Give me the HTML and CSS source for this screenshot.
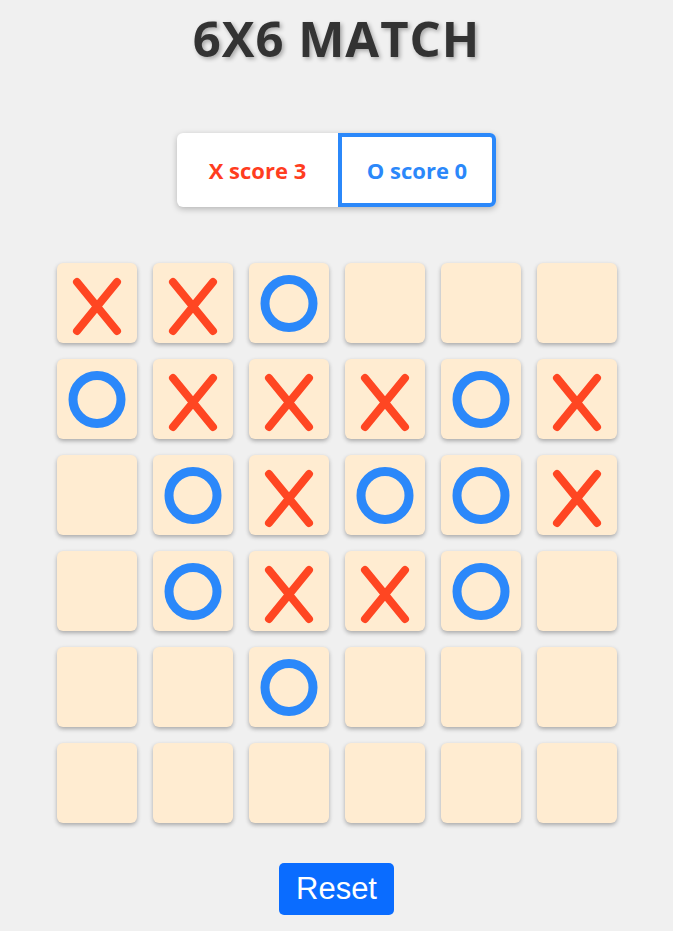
FILE: index.html
```html
<!DOCTYPE html>
<html lang="en">
<head>
    <meta charset="UTF-8">
    <meta name="viewport" content="width=device-width, initial-scale=1.0">
    <title>6X6 Match</title>
    <link rel="stylesheet" href="styles.css">
</head>
<body>
    <div class="game">
        <h1 class="title">6X6 MATCH</h1>

        <div class="scores">
            <div class="score score-x">X score 3</div>
            <div class="score score-o active">O score 0</div>
        </div>

        <div class="board" id="board"></div>

        <button class="reset" type="button">Reset</button>
    </div>

    <script>
        const layout = [
            "XXO...",
            "OXXXOX",
            ".OXOOX",
            ".OXXO.",
            "..O...",
            "......"
        ];

        const xMark = '<svg viewBox="0 0 80 80" width="80" height="80"><path d="M20 19 L60 68 M60 19 L20 68" stroke="#ff4622" stroke-width="8" stroke-linecap="round" fill="none"/></svg>';
        const oMark = '<svg viewBox="0 0 80 80" width="80" height="80"><circle cx="40" cy="40.5" r="24" stroke="#2b88fa" stroke-width="9" fill="none"/></svg>';

        const board = document.getElementById("board");
        layout.forEach(row => {
            for (const ch of row) {
                const cell = document.createElement("div");
                cell.classList.add("cell");
                if (ch === "X") cell.innerHTML = xMark;
                if (ch === "O") cell.innerHTML = oMark;
                board.appendChild(cell);
            }
        });
    </script>
</body>
</html>
```

FILE: styles.css
```css
body {
    margin: 0;
    padding: 0;
    background: #f0f0f0;
    font-family: 'Open Sans', 'Noto Sans', sans-serif;
}
.game {
    display: flex;
    flex-direction: column;
    align-items: center;
}
.title {
    margin: 8px 0 0;
    font-size: 49px;
    font-weight: 700;
    color: #333;
    letter-spacing: 1px;
    line-height: 60px;
    text-shadow: 2px 2px 4px rgba(0, 0, 0, 0.3);
}
.scores {
    display: flex;
    margin-top: 65px;
    background: #fff;
    border-radius: 6px;
    box-shadow: 0 2px 6px rgba(0, 0, 0, 0.25);
}
.score {
    width: 161px;
    height: 74px;
    box-sizing: border-box;
    display: flex;
    align-items: center;
    justify-content: center;
    font-size: 22px;
    font-weight: 700;
}
.score-x {
    color: #ff3d1f;
}
.score-o {
    width: 158px;
    color: #2b88fa;
}
.score.active {
    border: 4px solid #2b88fa;
    border-radius: 0 6px 6px 0;
}
.board {
    display: grid;
    grid-template-columns: repeat(6, 80px);
    grid-auto-rows: 80px;
    gap: 16px;
    margin-top: 56px;
}
.cell {
    background: #ffecd1;
    border-radius: 6px;
    box-shadow: 0 2px 4px rgba(0, 0, 0, 0.3);
}
.cell svg {
    display: block;
}
.reset {
    margin-top: 40px;
    padding: 8px 17px;
    font-family: 'Liberation Sans', Arial, sans-serif;
    font-size: 31px;
    line-height: 36px;
    color: #fff;
    background: #0a6cff;
    border: none;
    border-radius: 5px;
}
```
